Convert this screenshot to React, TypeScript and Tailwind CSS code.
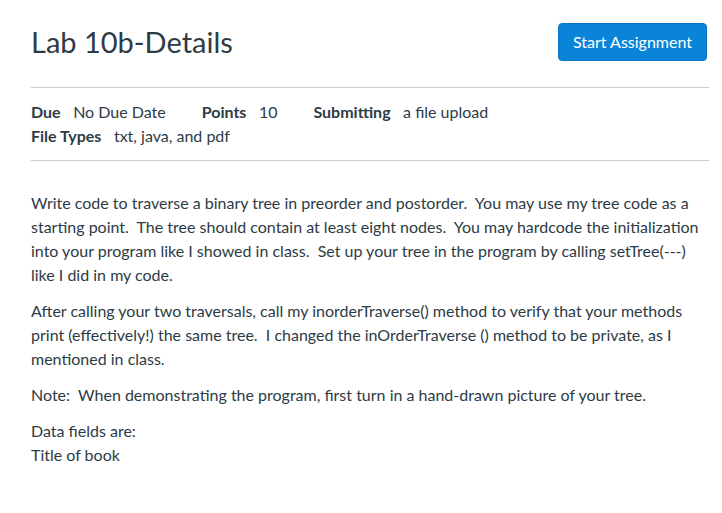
import React from 'react';

const details = [
  { label: 'Due', value: 'No Due Date' },
  { label: 'Points', value: '10' },
  { label: 'Submitting', value: 'a file upload' },
];

const App = () => {
  return (
    <div
      className="min-h-screen bg-white pl-[31px] pr-[13px] pt-[23px] text-[#2D3B45]"
      style={{ fontFamily: 'Lato, "Open Sans", sans-serif' }}
    >
      <div className="flex items-center justify-between border-b border-[#C7CDD1] pb-[26px]">
        <h1 className="text-[29px] font-normal leading-[38px] text-[#2D3B45]">Lab 10b-Details</h1>
        <button className="mr-[2px] h-[38px] w-[149px] rounded-[4px] border border-[#0774C4] bg-[#0A84D8] text-[16px] text-white">
          Start Assignment
        </button>
      </div>

      <div className="border-b border-[#C7CDD1] py-[12px] text-[16px] leading-[24px]">
        <div className="flex">
          {details.map((d) => (
            <div key={d.label} className="mr-[36px] flex">
              <span className="mr-[12.5px] font-bold">{d.label}</span>
              <span>{d.value}</span>
            </div>
          ))}
        </div>
        <div className="flex">
          <span className="mr-[12.5px] font-bold">File Types</span>
          <span>txt, java, and pdf</span>
        </div>
      </div>

      <div className="whitespace-pre-wrap pt-[30px] text-[16px] leading-[24px]">
        <p className="mb-[12px]">
          {'Write code to traverse a binary tree in preorder and postorder.  You may use my tree code as a starting point.  The tree should contain at least eight nodes.  You may hardcode the initialization into your program like I showed in class.  Set up your tree in the program by calling setTree(---) like I did in my code.'}
        </p>
        <p className="mb-[12px]">
          {'After calling your two traversals, call my inorderTraverse() method to verify that your methods print (effectively!) the same tree.  I changed the inOrderTraverse () method to be private, as I mentioned in class.'}
        </p>
        <p className="mb-[12px]">
          {'Note:  When demonstrating the program, first turn in a hand-drawn picture of your tree.'}
        </p>
        <p>
          {'Data fields are:'}
          <br />
          {'Title of book'}
        </p>
      </div>
    </div>
  );
};

export default App;
